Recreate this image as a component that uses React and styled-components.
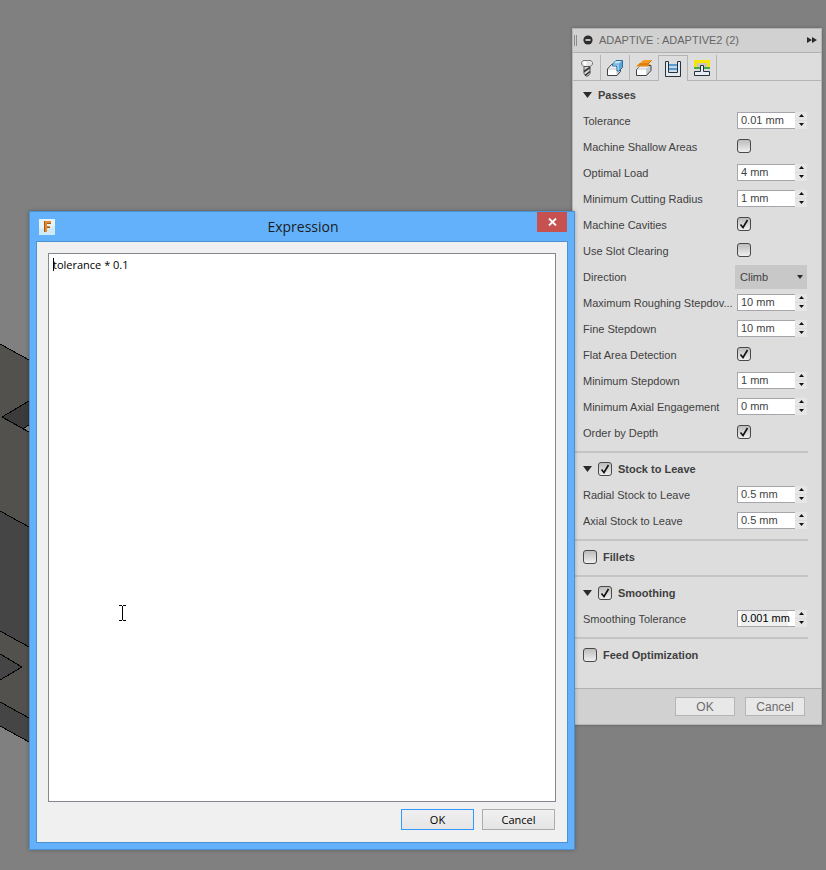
import { useId } from "react";
import styled, { createGlobalStyle } from "styled-components";

const passes = [
    { label: "Tolerance", type: "value", value: "0.01 mm" },
    { label: "Machine Shallow Areas", type: "check" },
    { label: "Optimal Load", type: "value", value: "4 mm" },
    { label: "Minimum Cutting Radius", type: "value", value: "1 mm" },
    { label: "Machine Cavities", type: "check", checked: true },
    { label: "Use Slot Clearing", type: "check" },
    { label: "Direction", type: "select", options: ["Climb"] },
    { label: "Maximum Roughing Stepdov...", type: "value", value: "10 mm" },
    { label: "Fine Stepdown", type: "value", value: "10 mm" },
    { label: "Flat Area Detection", type: "check", checked: true },
    { label: "Minimum Stepdown", type: "value", value: "1 mm" },
    { label: "Minimum Axial Engagement", type: "value", value: "0 mm" },
    { label: "Order by Depth", type: "check", checked: true },
];

const stock = [
    { label: "Radial Stock to Leave", type: "value", value: "0.5 mm" },
    { label: "Axial Stock to Leave", type: "value", value: "0.5 mm" },
];

const smoothing = [
    { label: "Smoothing Tolerance", type: "value", value: "0.001 mm", active: true },
];

export default function App() {
    return (
        <>
            <GlobalStyle />
            <Desktop>
                <Model />
                <AdaptivePanel />
                <ExpressionDialog />
                <TextCursor />
            </Desktop>
        </>
    );
}

function AdaptivePanel() {
    return (
        <Panel>
            <PanelHeader>
                <Grip />
                <IconButton aria-label="Collapse">
                    <svg width="10" height="10" viewBox="0 0 10 10">
                        <circle cx="5" cy="5" r="4.6" fill="#2b2b2b" />
                        <path d="M2.5 5h5" stroke="#e8e8e8" strokeWidth="1.6" />
                    </svg>
                </IconButton>
                <PanelTitle>ADAPTIVE : ADAPTIVE2 (2)</PanelTitle>
                <IconButton aria-label="Dock">
                    <svg width="10" height="8" viewBox="0 0 10 8">
                        <path d="M0 1l5 3l-5 3zM5 1l5 3l-5 3z" fill="#2b2b2b" />
                    </svg>
                </IconButton>
            </PanelHeader>
            <Tabs>
                <Tab aria-label="Tool"><ToolIcon /></Tab>
                <Tab aria-label="Geometry"><GeometryIcon /></Tab>
                <Tab aria-label="Heights"><HeightsIcon /></Tab>
                <Tab aria-label="Passes" $selected><PassesIcon /></Tab>
                <Tab aria-label="Linking"><LinkingIcon /></Tab>
                <TabFiller />
            </Tabs>
            <Sections>
                <Section title="Passes" fields={passes} />
                <Section title="Stock to Leave" fields={stock} checkable checked />
                <Section title="Fillets" checkable />
                <Section title="Smoothing" fields={smoothing} checkable checked />
                <Section title="Feed Optimization" checkable />
            </Sections>
            <PanelFooter>
                <PanelButton>OK</PanelButton>
                <PanelButton>Cancel</PanelButton>
            </PanelFooter>
        </Panel>
    );
}

function Section({ title, fields, checkable, checked }) {
    const id = useId();
    return (
        <SectionStyled>
            <SectionHeading>
                {fields && (
                    <IconButton aria-label={"Toggle " + title}>
                        <svg width="9" height="6" viewBox="0 0 9 6">
                            <path d="M0 0h9l-4.5 6z" fill="#2b2b2b" />
                        </svg>
                    </IconButton>
                )}
                {checkable && <CheckBox id={id} defaultChecked={checked} />}
                {checkable ? <label htmlFor={id}>{title}</label> : <span>{title}</span>}
            </SectionHeading>
            {fields && fields.map((field) => <Field key={field.label} {...field} />)}
        </SectionStyled>
    );
}

function Field({ label, type, value, checked, active, options }) {
    const id = useId();
    return (
        <Row>
            <FieldLabel htmlFor={id}>{label}</FieldLabel>
            {type === "check" && (
                <Control>
                    <CheckBox id={id} defaultChecked={checked} />
                </Control>
            )}
            {type === "value" && (
                <Control>
                    <ValueInput id={id} defaultValue={value} $active={active} />
                    <Spinner>
                        <SpinButton aria-label="Increase"><Arrow d="M0 3h5l-2.5-3z" /></SpinButton>
                        <SpinButton aria-label="Decrease"><Arrow d="M0 0h5l-2.5 3z" /></SpinButton>
                    </Spinner>
                </Control>
            )}
            {type === "select" && (
                <SelectWrap>
                    <Select id={id}>
                        {options.map((option) => <option key={option}>{option}</option>)}
                    </Select>
                    <svg width="6" height="4" viewBox="0 0 6 4">
                        <path d="M0 0h6l-3 4z" fill="#2b2b2b" />
                    </svg>
                </SelectWrap>
            )}
        </Row>
    );
}

function Arrow({ d }) {
    return (
        <svg width="5" height="3" viewBox="0 0 5 3">
            <path d={d} fill="#111" />
        </svg>
    );
}

function CheckBox(props) {
    return (
        <CheckWrap>
            <input type="checkbox" {...props} />
            <svg width="14" height="14" viewBox="0 0 14 14">
                <path d="M3.5 7.5l2.500 3l4.500-7.500" fill="none" stroke="#111" strokeWidth="1.6" />
            </svg>
        </CheckWrap>
    );
}

function ExpressionDialog() {
    return (
        <Dialog role="dialog" aria-labelledby="expression-title">
            <TitleBar>
                <FusionIcon />
                <DialogTitle id="expression-title">Expression</DialogTitle>
                <CloseButton aria-label="Close">
                    <svg width="9" height="8" viewBox="0 0 9 8">
                        <path d="M1 0.5l7 7M8 0.5l-7 7" stroke="#fff" strokeWidth="1.8" />
                    </svg>
                </CloseButton>
            </TitleBar>
            <DialogBody>
                <Editor>
                    <Caret />
                    <ExpressionText aria-label="Expression" defaultValue="tolerance * 0.1" spellCheck={false} />
                </Editor>
                <DialogButtons>
                    <DialogButton $primary>OK</DialogButton>
                    <DialogButton>Cancel</DialogButton>
                </DialogButtons>
            </DialogBody>
        </Dialog>
    );
}

// part of the machined model that shows left of the dialog
function Model() {
    return (
        <ModelSvg width="60" height="440" viewBox="0 0 60 440">
            <path d="M0 14l60 33v400l-60-51z" fill="#53514e" />
            <path d="M0 181l60 33v120l-60-33z" fill="#454545" />
            <path d="M0 372l60 33v24l-60-33z" fill="#454545" />
            <path d="M0 396l60 33v11h-60z" fill="#808080" />
            <path d="M0 324l22 13l-22 13z" fill="#454545" />
            <path d="M2 87l27-16v31z" fill="#3b3b3b" />
            <path d="M24 98l5-3v7z" fill="#8c8c8c" />
            <path
                d="M0 14l60 33M0 181l60 33M0 301l60 33M0 372l60 33M0 396l60 33M0 324l22 13l-22 13M29 71l-27 16l27 15M24 98l5-3"
                fill="none"
                stroke="#000"
                shapeRendering="crispEdges"
            />
        </ModelSvg>
    );
}

function TextCursor() {
    return (
        <CursorSvg width="7" height="16" viewBox="0 0 7 16">
            <path d="M0 0.5h3M4 0.5h3M3.5 1v14M0 15.5h3M4 15.5h3" stroke="#000" />
        </CursorSvg>
    );
}

function FusionIcon() {
    return (
        <svg width="16" height="16" viewBox="0 0 16 16">
            <path d="M0 0h16v16h-16z" fill="#e6f4fa" />
            <path d="M0 10l16-3v9h-16z" fill="#cfe9f5" />
            <path d="M5 2h7v3h-4v2h3v2h-3v4h-3z" fill="#e58a2c" />
            <path d="M5 2h1v11h-1zM8 4h4v1h-4zM8 8h3v1h-3z" fill="#a9571a" />
        </svg>
    );
}

function ToolIcon() {
    return (
        <svg width="16" height="18" viewBox="0 0 16 18">
            <path d="M2.5 3.500l1.500-2h8l1.500 2v2l-2.500 2h-6l-2.500-2z" fill="#e4e4e4" stroke="#777" />
            <path d="M4.500 2.500h3v4h-3z" fill="#fff" />
            <path d="M5 7.500h6v7l-2 2.500h-2l-2-2.500z" fill="#d6d6d6" stroke="#555" />
            <path d="M5 12.500l6-4M6 16.500l5-4" stroke="#333" strokeWidth="1.600" />
        </svg>
    );
}

function GeometryIcon() {
    return (
        <svg width="16" height="16" viewBox="0 0 16 16">
            <path d="M0.500 9l4-4.500h6l3 3v4l-3.500 4h-9.500z" fill="#c6cbd1" stroke="#3a444d" strokeLinejoin="round" />
            <path d="M1 9.500h8.500v5.500h-8.500z" fill="#fff" />
            <path d="M1.500 8.500l3.500-3.500h5v3.500z" fill="#eceef0" />
            <path d="M5.500 4l3.500-3.500h6.500v7l-3.500 3.500h-2v-4l-1-1h-3.500z" fill="#5ba4d8" stroke="#286c9c" strokeLinejoin="round" />
            <path d="M6.500 3.500l2.500-2.500h5.500l-2.500 2.500z" fill="#c3e2f5" />
            <path d="M6 4.500h6v6h-1.500v-4l-1-1h-3.500z" fill="#a3cfee" />
        </svg>
    );
}

function HeightsIcon() {
    return (
        <svg width="16" height="16" viewBox="0 0 16 16">
            <path d="M0.500 9.500l4-4h10.500v5l-4.500 5h-10z" fill="#c6cbd1" stroke="#3a444d" strokeLinejoin="round" />
            <path d="M1 9.500h9v5.500h-9z" fill="#fff" />
            <path d="M1.500 8.500l2-2h9.500l-2.500 2z" fill="#eceef0" />
            <path d="M0 6.500l2.500-2.500h12l-3 2.500z" fill="#e88d14" />
            <path d="M3 4l4.500-4h8.500l-4 4z" fill="#f59b21" />
            <path d="M3 4h9l3.500-3.500" fill="none" stroke="#c46e08" />
        </svg>
    );
}

function PassesIcon() {
    return (
        <svg width="16" height="16" viewBox="0 0 16 16">
            <path d="M4 3h8v7h-8z" fill="#c3d8e8" />
            <path d="M4 3h8v2h-8zM4 7h8v2h-8z" fill="#559bd3" />
            <path d="M0.500 0.500h3v11h9v-11h3v15h-15z" fill="#e4eaef" stroke="#26333e" />
        </svg>
    );
}

function LinkingIcon() {
    return (
        <svg width="16" height="16" viewBox="0 0 16 16">
            <path d="M3 3h10v5h-10z" fill="#c6c6c6" />
            <path d="M0 0h16v8h-3v-5h-10v5h-3z" fill="#f7e600" />
            <path d="M0 7h6v2h-6zM10 7h6v2h-6z" fill="#43ad4b" />
            <path d="M6.500 5.500h3v6h6v4h-15v-4h6z" fill="#e9edf1" stroke="#26333e" />
        </svg>
    );
}

const GlobalStyle = createGlobalStyle`
* {
    box-sizing: border-box;
}
body {
    margin: 0;
    background: #808080;
    color: #3f3f3f;
    font-family: "Liberation Sans", Arial, sans-serif;
    font-size: 11px;
}
button, input, select, textarea {
    font: inherit;
    color: inherit;
    margin: 0;
    padding: 0;
    outline: none;
}
svg {
    display: block;
    flex-shrink: 0;
}
`

const Desktop = styled.main`
position: relative;
min-height: 100vh;
overflow: hidden;
background: #808080;
`

const ModelSvg = styled.svg`
position: absolute;
left: 0;
top: 330px;
`

const CursorSvg = styled.svg`
position: absolute;
left: 119px;
top: 605px;
pointer-events: none;
`

const Panel = styled.aside`
position: absolute;
top: 28px;
right: 4px;
width: 250px;
background: #dddddd;
border: 1px solid #b5b5b5;
box-shadow: 0 0 3px rgba(0, 0, 0, 0.25);
`

const PanelHeader = styled.header`
display: flex;
align-items: center;
gap: 6px;
height: 24px;
padding: 0 4px 1px 1px;
background: #d1d1d1;
border-bottom: 1px solid #b0b0b0;
`

const Grip = styled.span`
width: 3px;
height: 11px;
border: solid #8a8a8a;
border-width: 0 1px;
`

const PanelTitle = styled.h1`
flex: 1;
margin: 0;
font-size: 11px;
font-weight: normal;
color: #666666;
`

const IconButton = styled.button`
display: flex;
border: none;
background: none;
`

const Tabs = styled.nav`
display: flex;
height: 28px;
padding-top: 2px;
`

const Tab = styled.button`
display: flex;
align-items: center;
justify-content: center;
width: 29px;
border: solid #b5b5b5;
border-width: ${({ $selected }) => ($selected ? "1px 1px 0 0" : "0 1px 1px 0")};
background: none;
&:first-child {
    width: 28px;
}
`

const TabFiller = styled.span`
flex: 1;
border-bottom: 1px solid #b5b5b5;
`

const Sections = styled.div`
padding: 1px 13px 20px 0;
`

const SectionStyled = styled.section`
& + & {
    margin-top: 5px;
    padding-top: 3px;
    border-top: 2px solid #c4c4c4;
}
`

const SectionHeading = styled.h2`
display: flex;
align-items: center;
gap: 6px;
height: 26px;
margin: 0;
padding-left: 10px;
font-size: 11px;
font-weight: bold;
`

const Row = styled.div`
display: grid;
grid-template-columns: 1fr 74px;
align-items: center;
height: 26px;
padding-left: 10px;
`

const FieldLabel = styled.label`
overflow: hidden;
white-space: nowrap;
text-overflow: ellipsis;
`

const Control = styled.div`
display: flex;
padding: 0 0 2px 3px;
`

const CheckWrap = styled.span`
display: grid;
input {
    grid-area: 1 / 1;
    appearance: none;
    width: 14px;
    height: 14px;
    border: 1px solid #484848;
    border-radius: 3px;
    background: linear-gradient(#bcbcbc, #efefef);
}
svg {
    grid-area: 1 / 1;
    visibility: hidden;
    pointer-events: none;
}
input:checked + svg {
    visibility: visible;
}
`

const ValueInput = styled.input`
width: 58px;
height: 17px;
padding-left: 3px;
border: 1px solid #a5a5ab;
border-right: none;
background: ${({ $active }) => ($active ? "linear-gradient(#efefef, #efefef) 3px 0 / 47px 100% no-repeat #fff" : "#fff")};
color: ${({ $active }) => ($active ? "#000" : "#3f3f3f")};
`

const Spinner = styled.div`
display: grid;
grid-template-rows: 1fr 1fr;
gap: 1px;
width: 12px;
`

const SpinButton = styled.button`
display: flex;
align-items: center;
justify-content: center;
border: none;
background: #e6e6e6;
`

const SelectWrap = styled.div`
display: grid;
width: 72px;
margin-left: 1px;
align-items: center;
svg {
    grid-area: 1 / 1;
    justify-self: end;
    margin-right: 4px;
    pointer-events: none;
}
`

const Select = styled.select`
grid-area: 1 / 1;
appearance: none;
height: 24px;
padding-left: 5px;
border: none;
background: #c8c8c8;
`

const PanelFooter = styled.footer`
display: flex;
justify-content: flex-end;
gap: 10px;
padding: 8px 16px;
background: #d1d1d1;
border-top: 1px solid #b0b0b0;
`

const PanelButton = styled.button`
width: 60px;
height: 19px;
border: 1px solid #b5b5b5;
background: #e8e8e8;
color: #6b6b6b;
font-size: 12px;
`

const Dialog = styled.section`
position: absolute;
top: 211px;
right: 251px;
bottom: 20px;
left: 29px;
display: flex;
flex-direction: column;
padding: 0 6px 6px;
border: 1px solid #4a92d4;
background: #63b1fb;
box-shadow: 0 0 4px rgba(0, 0, 0, 0.3);
font-family: "Open Sans", "Noto Sans", sans-serif;
color: #000;
`

const TitleBar = styled.header`
display: grid;
grid-template-columns: 30px 1fr 30px;
align-items: center;
height: 29px;
padding: 0 1px 0 3px;
`

const DialogTitle = styled.h2`
margin: 0;
font-size: 14px;
font-weight: normal;
text-align: center;
color: #1c1c1c;
`

const CloseButton = styled.button`
display: flex;
align-items: center;
justify-content: center;
align-self: start;
height: 20px;
border: none;
background: #c75050;
`

const DialogBody = styled.div`
flex: 1;
display: flex;
flex-direction: column;
gap: 7px;
padding: 11px 11px 12px;
border: 1px solid #4a92d4;
background: #f0f0f0;
`

const Editor = styled.div`
position: relative;
flex: 1;
display: flex;
border: 1px solid #828790;
background: #fff;
`

const Caret = styled.span`
position: absolute;
top: 4px;
left: 4px;
width: 1px;
height: 13px;
background: #000;
`

const ExpressionText = styled.textarea`
flex: 1;
padding: 3px 4px;
border: none;
resize: none;
background: none;
line-height: 15px;
`

const DialogButtons = styled.div`
display: flex;
justify-content: flex-end;
gap: 8px;
padding-right: 1px;
`

const DialogButton = styled.button`
width: 73px;
height: 21px;
border: 1px solid ${({ $primary }) => ($primary ? "#3399ff" : "#acacac")};
background: linear-gradient(#f0f0f0, #e5e5e5);
`
